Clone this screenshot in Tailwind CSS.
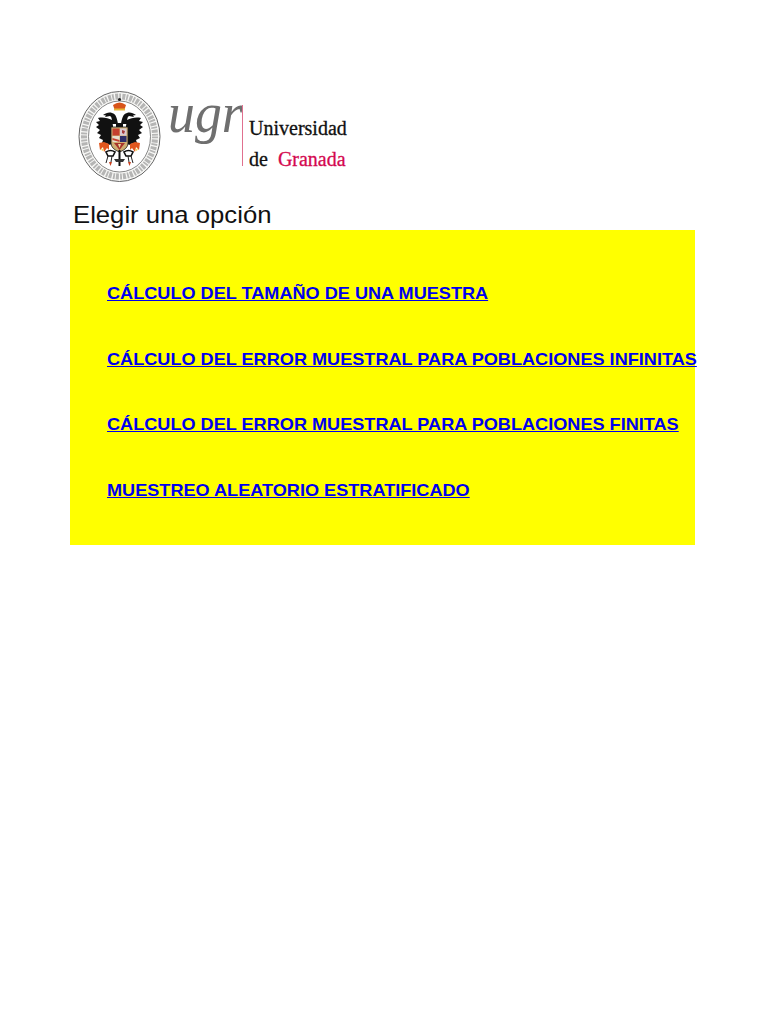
<!DOCTYPE html>
<html lang="es">

<head>
    <meta charset="UTF-8">
    <meta name="viewport" content="width=device-width, initial-scale=1.0">
    <title>Elegir una opción</title>
    <script src="https://cdn.jsdelivr.net/npm/@tailwindcss/browser@4"></script>
</head>

<body class="bg-white font-['Liberation_Sans',Arial,sans-serif]">
    <div class="ml-[70px] pt-[90px] w-[625px]">
        <!-- Logo UGR -->
        <div class="flex items-start pl-[8px] h-[101px]">
            <svg class="w-[84px] h-[93px] shrink-0" viewBox="0 0 84 93" aria-hidden="true">
                <ellipse cx="41.500" cy="46.500" rx="40.500" ry="45" fill="#f7f7f5" stroke="#666" stroke-width="1"/>
                <ellipse cx="41.500" cy="46.500" rx="35.500" ry="40" fill="none" stroke="#888" stroke-width="6" stroke-dasharray="1.800 1.300 3 1" opacity="0.6"/>
                <ellipse cx="41.500" cy="46.500" rx="31" ry="35.500" fill="#fff" stroke="#555" stroke-width="0.7"/>
                <!-- corona -->
                <path d="M35 15q6.500-5 13 0l-1.500 4.500h-10z" fill="#d8541a"/>
                <rect x="36" y="18.500" width="11" height="2" fill="#e5b63a"/>
                <circle cx="41.500" cy="9.500" r="1.600" fill="#222"/>
                <!-- cabezas -->
                <path d="M40 34c-1-6-2-10-6-11-3-1-6 0-9 2l3 .5-1 1.500 5-1c2 1 2 4 2 8z" fill="#111"/>
                <path d="M43 34c1-6 2-10 6-11 3-1 6 0 9 2l-3 .5 1 1.500-5-1c-2 1-2 4-2 8z" fill="#111"/>
                <path d="M38 33h7v7h-7z" fill="#111"/>
                <!-- alas -->
                <path d="M34 30c-4-2-9-3-14-2l2 3-4 1 3 3-3 2 4 3-3 3 4 2-2 3 4 2-1 3 4 0 4 2 3-3V36z" fill="#111"/>
                <path d="M49 30c4-2 9-3 14-2l-2 3 4 1-3 3 3 2-4 3 3 3-4 2 2 3-4 2 1 3-4 0-4 2-3-3V36z" fill="#111"/>
                <path d="M21 53l1 7 3-3 1 5 3-4 2 2v-6l-5-2z" fill="#e2571d"/>
                <path d="M62 53l-1 7-3-3-1 5-3-4-2 2v-6l5-2z" fill="#e2571d"/>
                <path d="M23 58l1 3 2-1zM60 58l-1 3-2-1z" fill="#f0d04a"/>
                <!-- escudo -->
                <path d="M33 37h17v16q0 6-8.500 9-8.500-3-8.500-9z" fill="#cfae72" stroke="#1a1a1a" stroke-width="0.8"/>
                <rect x="34.500" y="38.500" width="7" height="7" fill="#c5402f"/>
                <rect x="42" y="38.500" width="6.500" height="7" fill="#d9c9d2"/>
                <path d="M44 40l3 1-1 3-2-1z" fill="#a53a3a"/>
                <rect x="34.500" y="46" width="7" height="6" fill="#e8e0d0"/>
                <path d="M34.500 48l7 2v2l-7-2z" fill="#c5402f"/>
                <rect x="42" y="46" width="6.500" height="6" fill="#2f2f6a"/>
                <path d="M36 53h11l-5.500 7z" fill="#a8352c"/>
                <path d="M40 54l3 0-1.500 4z" fill="#e8d9a0"/>
                <!-- yugo y flechas -->
                <path d="M28 62c3-2 6-2 9 0l-2 4h-5zM46 62c3-2 6-2 9 0l-2 4h-5z" fill="none" stroke="#111" stroke-width="1.600"/>
                <path d="M30 66l-2 7M34 66l-1 6M50 66l1 6M53 66l2 7" stroke="#222" stroke-width="1"/>
                <path d="M40.500 60h2v16h-2z" fill="#111"/>
                <path d="M36 69h11l-2 3h-7z" fill="#333"/>
                <path d="M31 72h3l-1.500 4zM50 72h3l-1.500 4z" fill="#c8401f"/>
            </svg>
            <div class="relative w-[188px] h-[93px] shrink-0">
                <span class="absolute left-[6px] top-[-5px] origin-left scale-x-[0.96] font-['Liberation_Serif',serif] italic text-[56px] leading-none text-[#6f6f6f]">ugr</span>
                <div class="absolute left-[80px] top-[15px] w-px h-[61px] bg-[#e0708f]"></div>
                <span class="absolute left-[87px] top-[28px] font-['Liberation_Serif',serif] text-[20px] leading-none text-[#111] [-webkit-text-stroke:0.3px_#111]">Universidad</span>
                <span class="absolute left-[87px] top-[59px] font-['Liberation_Serif',serif] text-[20px] leading-none text-[#111] [-webkit-text-stroke:0.3px_#111]">de <span class="text-[#d4084f] ml-[5px] [-webkit-text-stroke:0.3px_#d4084f]">Granada</span></span>
            </div>
        </div>

        <h1 class="h-[39px] pl-[3px] text-[24px] leading-[47px] text-[#111] whitespace-nowrap"><span class="inline-block origin-left scale-x-[1.07]">Elegir una opción</span></h1>

        <!-- Opciones -->
        <div class="bg-[#ffff00] h-[315px] pt-[30.500px] pl-[37px] flex flex-col text-[16.500px] font-bold">
            <a href="#" class="h-[65.600px] flex items-center whitespace-nowrap"><span class="origin-left scale-x-[1.098] underline text-[#0000ee]">CÁLCULO DEL TAMAÑO DE UNA MUESTRA</span></a>
            <a href="#" class="h-[65.600px] flex items-center whitespace-nowrap"><span class="origin-left scale-x-[1.098] underline text-[#0000ee]">CÁLCULO DEL ERROR MUESTRAL PARA POBLACIONES INFINITAS</span></a>
            <a href="#" class="h-[65.600px] flex items-center whitespace-nowrap"><span class="origin-left scale-x-[1.098] underline text-[#0000ee]">CÁLCULO DEL ERROR MUESTRAL PARA POBLACIONES FINITAS</span></a>
            <a href="#" class="h-[65.600px] flex items-center whitespace-nowrap"><span class="origin-left scale-x-[1.098] underline text-[#0000ee]">MUESTREO ALEATORIO ESTRATIFICADO</span></a>
        </div>
    </div>
</body>

</html>
